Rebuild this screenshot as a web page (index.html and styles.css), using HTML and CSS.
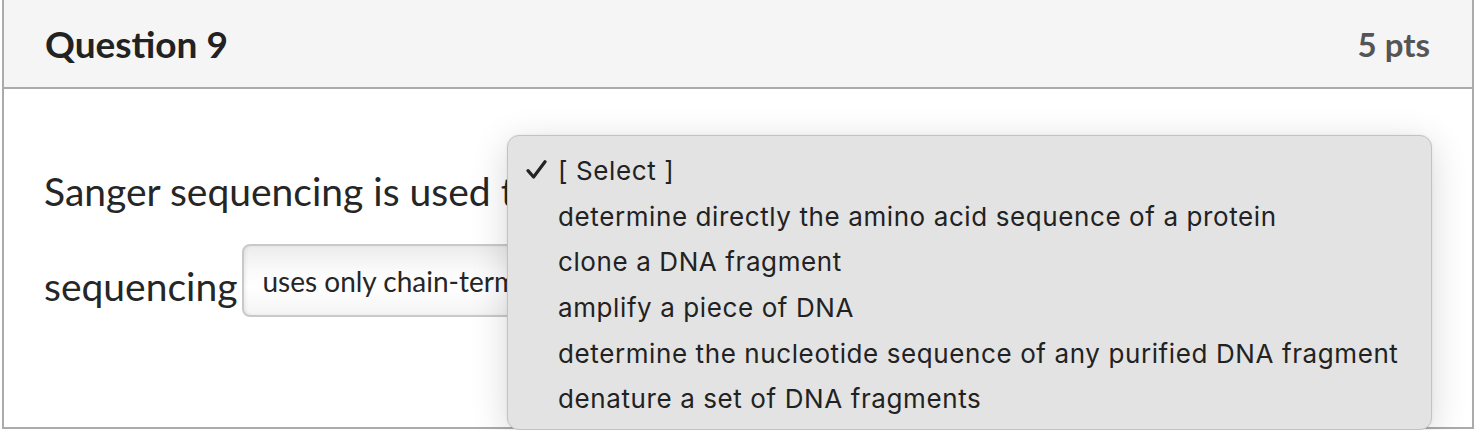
FILE: index.html
```html
<!DOCTYPE html>
<html lang="en">
<head>
<meta charset="utf-8">
<title>Question 9</title>
<link rel="stylesheet" href="styles.css">
</head>
<body>
  <div class="question">
    <div class="q-header">
      <span class="q-name">Question 9</span>
      <span class="q-points">5 pts</span>
    </div>
    <div class="q-body">
      <div class="q-line q-line-1">
        <span class="q-text">Sanger sequencing is used to</span>
      </div>
      <div class="q-line q-line-2">
        <span class="q-text q-text-2">sequencing</span>
        <div class="select-box"><span class="select-value">uses only chain-terminating nucleotides</span></div>
      </div>

      <div class="menu">
        <div class="menu-item">
          <span class="check">
            <svg width="21" height="19" viewBox="0 0 21 19"><path d="M2 10.6 L7.6 17 L19 1.8" fill="none" stroke="#232323" stroke-width="3.2" stroke-linecap="round" stroke-linejoin="round"/></svg>
          </span>
          <span class="menu-label">[ Select ]</span>
        </div>
        <div class="menu-item"><span class="check"></span><span class="menu-label">determine directly the amino acid sequence of a protein</span></div>
        <div class="menu-item"><span class="check"></span><span class="menu-label">clone a DNA fragment</span></div>
        <div class="menu-item"><span class="check"></span><span class="menu-label">amplify a piece of DNA</span></div>
        <div class="menu-item"><span class="check"></span><span class="menu-label">determine the nucleotide sequence of any purified DNA fragment</span></div>
        <div class="menu-item"><span class="check"></span><span class="menu-label">denature a set of DNA fragments</span></div>
      </div>
    </div>
  </div>
</body>
</html>
```

FILE: styles.css
```css
html, body {
  margin: 0;
  padding: 0;
  background: #ffffff;
  overflow: hidden;
}

body {
  width: 1478px;
  height: 430px;
  font-family: "Lato", "Open Sans", sans-serif;
  color: #262626;
}

.question {
  margin: 0 4px 0 2px;
  border: 2px solid #ababab;
  border-top: none;
}

.q-header {
  height: 87px;
  background: #f5f5f5;
  border-bottom: 2px solid #ababab;
  display: flex;
  align-items: center;
  justify-content: space-between;
  padding: 0 42px 0 41px;
}

.q-name {
  font-size: 37px;
  font-weight: 700;
  color: #222222;
}

.q-points {
  font-size: 33px;
  font-weight: 700;
  color: #555555;
}

.q-body {
  position: relative;
  height: 338px;
  padding: 78px 40px 0 40px;
  box-sizing: border-box;
}

.q-line {
  display: flex;
  align-items: flex-start;
}

.q-text {
  font-size: 39px;
  line-height: 48px;
  color: #262626;
  white-space: nowrap;
}

.q-line-2 {
  margin-top: 29px;
}

.q-text-2 {
  margin-top: 18px;
  margin-right: 5px;
}

.select-box {
  width: 420px;
  height: 73px;
  box-sizing: border-box;
  border: 2px solid #c9c9c9;
  border-radius: 8px;
  background: linear-gradient(#ececec 0%, #fafafa 35%, #ffffff 60%, #f4f4f4 100%);
  box-shadow: inset 2px 0 3px rgba(0, 0, 0, 0.06);
  display: flex;
  align-items: center;
  padding-left: 18px;
  overflow: hidden;
}

.select-value {
  font-size: 28px;
  color: #262626;
  white-space: nowrap;
}

.menu {
  position: absolute;
  left: 503px;
  top: 46px;
  width: 925px;
  height: 295px;
  box-sizing: border-box;
  background: #e3e3e3;
  border: 1px solid #c2c2c2;
  border-radius: 12px;
  box-shadow: 0 8px 36px rgba(0, 0, 0, 0.16), 0 0 3px rgba(0, 0, 0, 0.06);
  padding: 12px 0 0 19px;
  font-family: "Inter", "Liberation Sans", Arial, sans-serif;
  color: #222222;
}

.menu-item {
  display: flex;
  align-items: center;
  height: 45.6px;
  font-size: 26px;
  letter-spacing: 0.6px;
  white-space: nowrap;
}

.check {
  width: 31px;
  flex: none;
  display: flex;
  align-items: center;
}

.check svg {
  display: block;
  margin-top: -2px;
  margin-left: -1px;
}
```
